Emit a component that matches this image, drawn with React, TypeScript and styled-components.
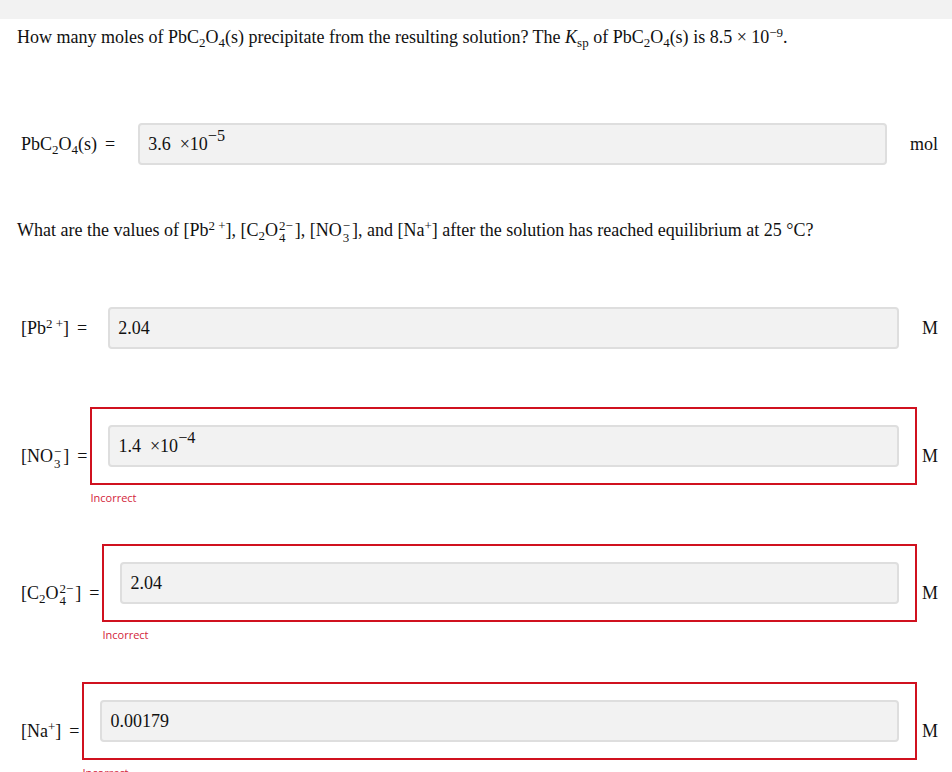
import React from "react";
import styled, { createGlobalStyle } from "styled-components";

const GlobalStyle = createGlobalStyle`
  html, body {
    margin: 0;
    padding: 0;
    background: #ffffff;
  }
  body {
    font-family: "Liberation Serif", "Times New Roman", serif;
    color: #111111;
  }
`;

const TopBar = styled.div`
  height: 19px;
  background: #f2f2f2;
`;

const Page = styled.div`
  padding: 0 14px 0 17px;
`;

const Question = styled.p<{ $top: number; $bottom: number }>`
  margin: ${(p) => p.$top}px 0 ${(p) => p.$bottom}px;
  font-size: 18px;
  line-height: 24px;
  height: 24px;
  white-space: nowrap;
`;

const Sub = styled.sub`
  font-size: 0.72em;
  line-height: 0;
  vertical-align: -0.3em;
`;

const Sup = styled.sup`
  font-size: 0.72em;
  line-height: 0;
  vertical-align: 0.5em;
`;

const Stack = styled.span`
  display: inline-flex;
  flex-direction: column;
  vertical-align: 0.45em;
  font-size: 0.72em;
  line-height: 0.95em;
  height: 0.95em;
  margin: 0 2px 0 1px;
`;

const Eq = styled.span`
  margin-left: 8px;
`;

const Row = styled.div<{ $gap: number }>`
  display: flex;
  align-items: center;
  padding-left: 4px;
  margin-bottom: ${(p) => p.$gap}px;
`;

const Label = styled.div<{ $space: number }>`
  font-size: 18px;
  white-space: nowrap;
  margin-right: ${(p) => p.$space}px;
`;

const FieldBlock = styled.div`
  flex: 1;
  display: flex;
  flex-direction: column;
`;

const Frame = styled.div<{ $error: boolean }>`
  padding: 16px;
  border: 2px solid ${(p) => (p.$error ? "#d0111f" : "transparent")};
`;

const Input = styled.div`
  box-sizing: border-box;
  height: 42px;
  display: flex;
  align-items: center;
  padding: 0 8px;
  background: #f2f2f2;
  border: 2px solid #dedede;
  border-radius: 4px;
  font-size: 18px;
  white-space: pre;
`;

const Value = styled.span`
  line-height: 20px;
`;

const ValueSup = styled.sup`
  font-size: 0.9em;
  line-height: 0;
  vertical-align: 0.55em;
`;

const Feedback = styled.div`
  margin-top: 5px;
  height: 15px;
  line-height: 15px;
  font-family: "Open Sans", "Liberation Sans", sans-serif;
  font-size: 11px;
  color: #d3243a;
`;

const Unit = styled.div`
  margin-left: 5px;
  font-size: 18px;
`;

const Power = ({ base, exp }: { base: string; exp: string }) => (
  <Value>
    {base}
    {"  ×10"}
    <ValueSup>{exp}</ValueSup>
  </Value>
);

interface FieldProps {
  label: React.ReactNode;
  value: React.ReactNode;
  unit: string;
  error?: boolean;
  space?: number;
  gap: number;
}

const AnswerRow = ({ label, value, unit, error = false, space = 3, gap }: FieldProps) => (
  <Row $gap={gap}>
    <Label $space={space}>
      {label}
      <Eq>=</Eq>
    </Label>
    <FieldBlock>
      <Frame $error={error}>
        <Input>{typeof value === "string" ? <Value>{value}</Value> : value}</Input>
      </Frame>
      {error && <Feedback>Incorrect</Feedback>}
    </FieldBlock>
    <Unit>{unit}</Unit>
  </Row>
);

const PbC2O4 = () => (
  <>
    PbC<Sub>2</Sub>O<Sub>4</Sub>(s)
  </>
);

const Oxalate = () => (
  <>
    C<Sub>2</Sub>O
    <Stack>
      <span>2−</span>
      <span>4</span>
    </Stack>
  </>
);

const Nitrate = () => (
  <>
    NO
    <Stack>
      <span>−</span>
      <span>3</span>
    </Stack>
  </>
);

export default function App() {
  return (
    <>
      <GlobalStyle />
      <TopBar />
      <Page>
        <Question $top={6} $bottom={56}>
          How many moles of <PbC2O4 /> precipitate from the resulting solution? The{" "}
          <i>K</i>
          <Sub>sp</Sub> of <PbC2O4 /> is 8.5 × 10<Sup>−9</Sup>.
        </Question>

        <AnswerRow label={<PbC2O4 />} value={<Power base="3.6" exp="−5" />} unit="mol" space={5} gap={35} />

        <Question $top={0} $bottom={47}>
          What are the values of [Pb<Sup>2 +</Sup>], [<Oxalate />], [<Nitrate />], and [Na<Sup>+</Sup>] after the
          solution has reached equilibrium at 25 °C?
        </Question>

        <AnswerRow
          label={
            <>
              [Pb<Sup>2 +</Sup>]
            </>
          }
          value="2.04"
          unit="M"
          gap={40}
        />

        <AnswerRow
          label={
            <>
              [<Nitrate />]
            </>
          }
          value={<Power base="1.4" exp="−4" />}
          unit="M"
          error
          gap={39}
        />

        <AnswerRow
          label={
            <>
              [<Oxalate />]
            </>
          }
          value="2.04"
          unit="M"
          error
          gap={40}
        />

        <AnswerRow
          label={
            <>
              [Na<Sup>+</Sup>]
            </>
          }
          value="0.00179"
          unit="M"
          error
          gap={0}
        />
      </Page>
    </>
  );
}
